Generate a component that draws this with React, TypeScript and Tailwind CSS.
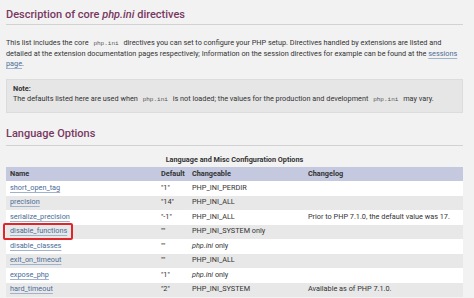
import React from 'react';

type Row = {
  name: string;
  def: string;
  change: React.ReactNode;
  log?: string;
};

const rows: Row[] = [
  { name: 'short_open_tag', def: '"1"', change: 'PHP_INI_PERDIR' },
  { name: 'precision', def: '"14"', change: 'PHP_INI_ALL' },
  { name: 'serialize_precision', def: '"-1"', change: 'PHP_INI_ALL', log: 'Prior to PHP 7.1.0, the default value was 17.' },
  { name: 'disable_functions', def: '""', change: 'PHP_INI_SYSTEM only' },
  { name: 'disable_classes', def: '""', change: <><i>php.ini</i> only</> },
  { name: 'exit_on_timeout', def: '""', change: 'PHP_INI_ALL' },
  { name: 'expose_php', def: '"1"', change: <><i>php.ini</i> only</> },
  { name: 'hard_timeout', def: '"2"', change: 'PHP_INI_SYSTEM', log: 'Available as of PHP 7.1.0.' },
];

const Code = ({ children }: { children: React.ReactNode }) => (
  <code className="font-['Liberation_Mono',monospace] text-[6px] text-[#555] px-[3px]">{children}</code>
);

const Link = ({ children }: { children: React.ReactNode }) => (
  <a className="text-[#4a6d98] underline decoration-[#9fb3cc] underline-offset-[1.5px]">{children}</a>
);

export default function App() {
  return (
    <div className="w-[474px] h-[298px] overflow-hidden bg-[#f2f2f2] font-['Roboto',sans-serif] text-[#333]">
      <div className="w-[463px] pl-[6px]">
        <h2 className="pt-[7px] pb-[2px] text-[11px] leading-[15px] font-medium text-[#793862] border-b border-[#d2d2d2]">
          Description of core <i>php.ini</i> directives
        </h2>

        <p className="mt-[13px] text-[7.3px] leading-[10px]">
          This list includes the core <Code>php.ini</Code> directives you can set to configure your PHP setup. Directives handled by extensions are listed and
          detailed at the extension documentation pages respectively; Information on the session directives for example can be found at the <Link>sessions page</Link>.
        </p>

        <div className="mt-[10px] bg-[#e6e6e6] border border-[#dcdcdc] pt-[4px] pb-[7px] px-[6px] text-[7.3px] leading-[10px]">
          <div className="font-bold">Note:</div>
          <div>
            The defaults listed here are used when <Code>php.ini</Code> is not loaded; the values for the production and development <Code>php.ini</Code> may vary.
          </div>
        </div>

        <h2 className="mt-[14px] pb-[4px] text-[11px] leading-[14px] font-medium text-[#793862] border-b border-[#d2d2d2]">
          Language Options
        </h2>

        <div className="relative mt-[9px] text-[7.3px]">
          <div className="text-center font-bold leading-[10px] mb-[2px]">Language and Misc Configuration Options</div>
          <table className="w-full table-fixed border-collapse">
            <colgroup>
              <col className="w-[151px]" />
              <col className="w-[31px]" />
              <col className="w-[116px]" />
              <col />
            </colgroup>
            <thead>
              <tr className="bg-[#c4c9df] h-[14px] font-bold text-left">
                <th className="pl-[4px]">Name</th>
                <th className="pl-[4px]">Default</th>
                <th className="pl-[4px]">Changeable</th>
                <th className="pl-[4px]">Changelog</th>
              </tr>
            </thead>
            <tbody>
              {rows.map((r, i) => (
                <tr key={r.name} className={`h-[14.5px] ${i % 2 === 0 ? 'bg-white' : 'bg-[#e8e8e8]'}`}>
                  <td className="pl-[4px]"><Link>{r.name}</Link></td>
                  <td className="pl-[4px]">{r.def}</td>
                  <td className="pl-[4px]">{r.change}</td>
                  <td className="pl-[4px]">{r.log}</td>
                </tr>
              ))}
            </tbody>
          </table>
          <div className="absolute left-[-3px] top-[68px] w-[70px] h-[17px] border-2 border-[#e0262a] rounded-[2px]" />
        </div>
      </div>
    </div>
  );
}
